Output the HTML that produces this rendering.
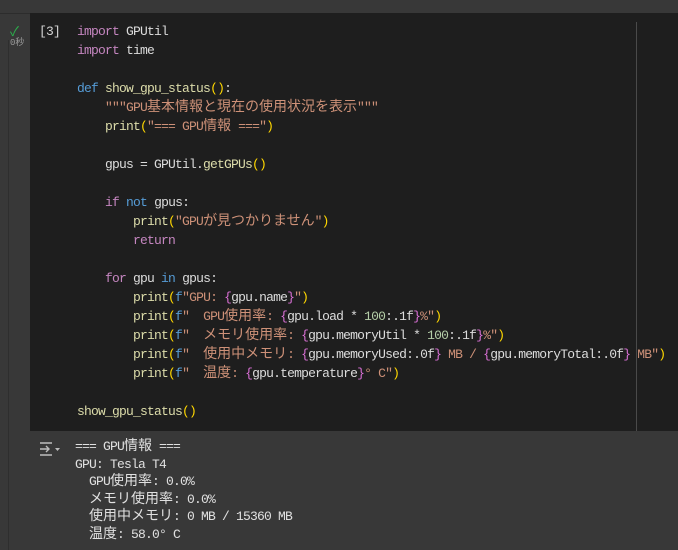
<!DOCTYPE html>
<html><head><meta charset="utf-8"><style>
body{margin:0;width:678px;height:550px;background:#383838;overflow:hidden;position:relative;font-family:"Liberation Mono","Noto Sans CJK JP",monospace;}
.top{position:absolute;left:0;top:0;width:678px;height:13px;background:#383838;border-bottom:1px solid #2c2c2c}
.cell{position:absolute;left:30px;top:13px;width:648px;height:418px;background:#1e1e1e}
.ruler{position:absolute;width:1px;height:409px;background:#4a4a4a}
.gut{position:absolute;left:8px;top:40px;width:1px;height:510px;background:#2e2e2e}
pre{margin:0;position:absolute;font-family:inherit;font-size:13px;letter-spacing:-0.8px;color:#dcdcdc;white-space:pre}
.code{left:77px;top:22px;line-height:19px}
.out{left:75px;top:438px;line-height:17.6px;color:#e0e0e0}
.j{font-size:14px;line-height:1;letter-spacing:0}
.k{color:#c586c0}.b{color:#569cd6}.f{color:#dcdcaa}.s{color:#ce9178}.p{color:#ffd700}.m{color:#da70d6}.n{color:#b5cea8}.v{color:#9cdcfe}
.num{position:absolute;left:39px;top:22px;font-size:13px;letter-spacing:-0.8px;color:#d4d4d4;line-height:19px;font-family:inherit}
</style></head><body>
<div class="top"></div>
<div class="gut"></div>
<div style="position:absolute;left:10px;top:21px;font-size:13px;color:#2bb24c">✓</div>
<div style="position:absolute;left:10px;top:35px;font-size:9px;color:#9a9a9a">0<span style="font-family:'Noto Sans CJK JP',sans-serif">秒</span></div>
<div class="cell"><div class="ruler" style="left:606px;top:9px"></div></div>
<div class="num">[3]</div>
<pre class="code"><span class="k">import</span> GPUtil
<span class="k">import</span> time

<span class="b">def</span> <span class="f">show_gpu_status</span><span class="p">()</span>:
    <span class="s">"""GPU<span class="j">基本情報と現在の使用状況を表示</span>"""</span>
    <span class="f">print</span><span class="p">(</span><span class="s">"=== GPU<span class="j">情報</span> ==="</span><span class="p">)</span>

    gpus = GPUtil.<span class="f">getGPUs</span><span class="p">()</span>

    <span class="k">if</span> <span class="b">not</span> gpus:
        <span class="f">print</span><span class="p">(</span><span class="s">"GPU<span class="j">が見つかりません</span>"</span><span class="p">)</span>
        <span class="k">return</span>

    <span class="k">for</span> gpu <span class="b">in</span> gpus:
        <span class="f">print</span><span class="p">(</span><span class="b">f</span><span class="s">"GPU: </span><span class="m">{</span>gpu.name<span class="m">}</span><span class="s">"</span><span class="p">)</span>
        <span class="f">print</span><span class="p">(</span><span class="b">f</span><span class="s">"  GPU<span class="j">使用率</span>: </span><span class="m">{</span>gpu.load * <span class="n">100</span>:.1f<span class="m">}</span><span class="s">%"</span><span class="p">)</span>
        <span class="f">print</span><span class="p">(</span><span class="b">f</span><span class="s">"  <span class="j">メモリ使用率</span>: </span><span class="m">{</span>gpu.memoryUtil * <span class="n">100</span>:.1f<span class="m">}</span><span class="s">%"</span><span class="p">)</span>
        <span class="f">print</span><span class="p">(</span><span class="b">f</span><span class="s">"  <span class="j">使用中メモリ</span>: </span><span class="m">{</span>gpu.memoryUsed:.0f<span class="m">}</span><span class="s"> MB / </span><span class="m">{</span>gpu.memoryTotal:.0f<span class="m">}</span><span class="s"> MB"</span><span class="p">)</span>
        <span class="f">print</span><span class="p">(</span><span class="b">f</span><span class="s">"  <span class="j">温度</span>: </span><span class="m">{</span>gpu.temperature<span class="m">}</span><span class="s">° C"</span><span class="p">)</span>

<span class="f">show_gpu_status</span><span class="p">()</span></pre>
<svg style="position:absolute;left:38px;top:441px" width="24" height="16" viewBox="0 0 24 16"><g stroke="#bdbdbd" stroke-width="1.4" fill="none"><path d="M2 2h12M2 14h12M2 8h9M8 5l3 3-3 3"/></g><path d="M17 7h5l-2.5 3z" fill="#bdbdbd"/></svg>
<pre class="out">=== GPU<span class="j">情報</span> ===
GPU: Tesla T4
  GPU<span class="j">使用率</span>: 0.0%
  <span class="j">メモリ使用率</span>: 0.0%
  <span class="j">使用中メモリ</span>: 0 MB / 15360 MB
  <span class="j">温度</span>: 58.0° C</pre>
</body></html>
